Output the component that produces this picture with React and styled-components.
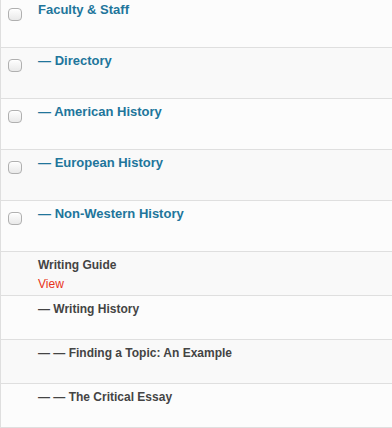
import React from 'react'
import styled, { createGlobalStyle } from 'styled-components';

const rows = [
  { title: 'Faculty & Staff', depth: 0, editable: true },
  { title: 'Directory', depth: 1, editable: true },
  { title: 'American History', depth: 1, editable: true },
  { title: 'European History', depth: 1, editable: true },
  { title: 'Non-Western History', depth: 1, editable: true },
  { title: 'Writing Guide', depth: 0, editable: false, actions: ['View'] },
  { title: 'Writing History', depth: 1, editable: false },
  { title: 'Finding a Topic: An Example', depth: 2, editable: false },
  { title: 'The Critical Essay', depth: 2, editable: false },
];

function App() {
  return (
    <>
      <GlobalStyle />
      <Table>
        {rows.map((row, i) => (
          <Row key={row.title} alt={i % 2 === 1} tall={row.editable}>
            <CheckCell>
              {row.editable && <Check type="checkbox" aria-label={row.title} />}
            </CheckCell>
            <TitleCell>
              <RowTitle editable={row.editable}>
                {'— '.repeat(row.depth)}
                {row.title}
              </RowTitle>
              {row.actions && (
                <RowActions>
                  {row.actions.map((a) => (
                    <ActionLink key={a}>{a}</ActionLink>
                  ))}
                </RowActions>
              )}
            </TitleCell>
          </Row>
        ))}
      </Table>
    </>
  )
}

export default App

const GlobalStyle = createGlobalStyle`
body {
  margin: 0;
  background: #fcfcfc;
  font-family: "Liberation Sans", Arial, sans-serif;
  overflow: hidden;
}
`;

const Table = styled.div`
display: flex;
flex-direction: column;
margin-top: -3px;
width: 392px;
border-left: 1px solid #dfdfdf;
box-sizing: border-box;
`;

const Row = styled.div`
display: grid;
grid-template-columns: 37px 1fr;
height: ${(p) => (p.tall ? '50px' : '43px')};
background: ${(p) => (p.alt ? '#f9f9f9' : '#fcfcfc')};
border-bottom: 1px solid #dfdfdf;
`;

const CheckCell = styled.div`
padding: 11px 0 0 7px;
`;

const Check = styled.input`
appearance: none;
-webkit-appearance: none;
display: block;
margin: 0;
width: 14px;
height: 13px;
box-sizing: border-box;
border: 1px solid #b0b0b0;
border-radius: 4px;
background: linear-gradient(#fefefe, #e9e9e9);
box-shadow: inset 0 1px 0 #fff;
`;

const TitleCell = styled.div`
padding: 4px 0 0 0;
`;

const RowTitle = styled.div`
font-weight: bold;
font-size: ${(p) => (p.editable ? '13px' : '12px')};
line-height: 18px;
color: ${(p) => (p.editable ? '#21759b' : '#444')};
white-space: nowrap;
`;

const RowActions = styled.div`
padding-top: 1px;
font-size: 12px;
line-height: 18px;
`;

const ActionLink = styled.span`
color: #e8321a;
`;
